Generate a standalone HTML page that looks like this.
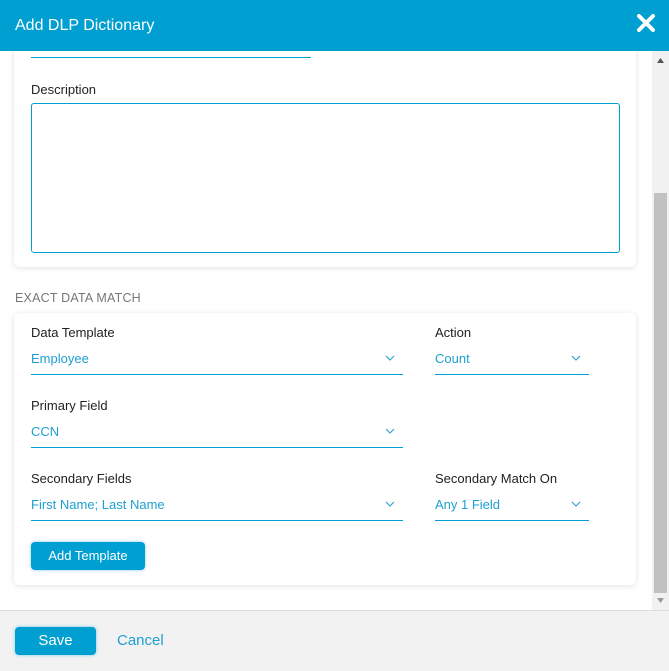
<!DOCTYPE html>
<html><head><style>
*{box-sizing:border-box;margin:0;padding:0}
body{width:669px;height:671px;overflow:hidden;background:#fff;font-family:"Liberation Sans",sans-serif;position:relative}
.hdr{position:absolute;left:0;top:0;width:669px;height:51px;background:#009fd1;color:#fff;font-size:16px;line-height:51px;padding-left:15px}
.x{position:absolute;right:14px;top:14px}
.card{position:absolute;left:14px;width:622px;background:#fff;border-radius:5px;box-shadow:0 1px 6px rgba(0,0,0,.12)}
.lbl{position:absolute;font-size:13px;color:#222}
.val{position:absolute;font-size:13px;color:#1e9fd0}
.ul{position:absolute;height:1px;background:#009fd1}
.chev{position:absolute}
.sb{position:absolute;left:652px;top:51px;width:17px;height:560px;background:#f1f1f1}
.thumb{position:absolute;left:2px;top:142px;width:13px;height:400px;background:#c1c1c1}
.foot{position:absolute;left:0;top:610px;width:669px;height:61px;background:#f2f2f2;border-top:1px solid #ddd}
.btn{position:absolute;background:#009fd1;color:#fff;border-radius:4px;text-align:center;box-shadow:0 0 3px rgba(0,159,209,.5)}
</style></head><body>
<div class="card" style="top:40px;height:227px"></div>
<div class="ul" style="left:31px;top:57px;width:280px"></div>
<div class="lbl" style="left:31px;top:82px">Description</div>
<div style="position:absolute;left:31px;top:103px;width:589px;height:150px;border:1px solid #009fd1;border-radius:3px"></div>
<div style="position:absolute;left:15px;top:291px;font-size:12.5px;color:#777;letter-spacing:.2px">EXACT DATA MATCH</div>
<div class="card" style="top:313px;height:272px"></div>
<div class="lbl" style="left:31px;top:325px">Data Template</div>
<div class="val" style="left:31px;top:351px">Employee</div>
<div class="ul" style="left:31px;top:374px;width:372px"></div>
<div class="lbl" style="left:435px;top:325px">Action</div>
<div class="val" style="left:435px;top:351px">Count</div>
<div class="ul" style="left:435px;top:374px;width:154px"></div>
<div class="lbl" style="left:31px;top:398px">Primary Field</div>
<div class="val" style="left:31px;top:424px">CCN</div>
<div class="ul" style="left:31px;top:447px;width:372px"></div>
<div class="lbl" style="left:31px;top:471px">Secondary Fields</div>
<div class="val" style="left:31px;top:497px">First Name; Last Name</div>
<div class="ul" style="left:31px;top:520px;width:372px"></div>
<div class="lbl" style="left:435px;top:471px">Secondary Match On</div>
<div class="val" style="left:435px;top:497px">Any 1 Field</div>
<div class="ul" style="left:435px;top:520px;width:154px"></div>
<svg class="chev" style="left:385px;top:355px" width="10" height="7"><path d="M1 1l4 4 4-4" stroke="#1e9fd0" fill="none" stroke-width="1"/></svg>
<svg class="chev" style="left:571px;top:355px" width="10" height="7"><path d="M1 1l4 4 4-4" stroke="#1e9fd0" fill="none" stroke-width="1"/></svg>
<svg class="chev" style="left:385px;top:428px" width="10" height="7"><path d="M1 1l4 4 4-4" stroke="#1e9fd0" fill="none" stroke-width="1"/></svg>
<svg class="chev" style="left:385px;top:501px" width="10" height="7"><path d="M1 1l4 4 4-4" stroke="#1e9fd0" fill="none" stroke-width="1"/></svg>
<svg class="chev" style="left:571px;top:501px" width="10" height="7"><path d="M1 1l4 4 4-4" stroke="#1e9fd0" fill="none" stroke-width="1"/></svg>
<div class="btn" style="left:31px;top:542px;width:114px;height:28px;line-height:28px;font-size:13px">Add Template</div>
<div class="sb"><div class="thumb"></div>
<svg style="position:absolute;left:5px;top:7px" width="7" height="5"><path d="M0 5L3.5 0 7 5z" fill="#555"/></svg>
<svg style="position:absolute;left:5px;top:547px" width="7" height="5"><path d="M0 0L3.5 5 7 0z" fill="#999"/></svg>
</div>
<div class="hdr">Add DLP Dictionary
<svg class="x" width="18" height="18"><path d="M2 2L16 16M16 2L2 16" stroke="#fff" stroke-width="4" stroke-linecap="round"/></svg></div>
<div class="foot">
<div class="btn" style="left:15px;top:16px;width:81px;height:28px;line-height:28px;font-size:15px">Save</div>
<div style="position:absolute;left:117px;top:21px;font-size:15px;color:#1e9fd0">Cancel</div>
</div>
</body></html>
